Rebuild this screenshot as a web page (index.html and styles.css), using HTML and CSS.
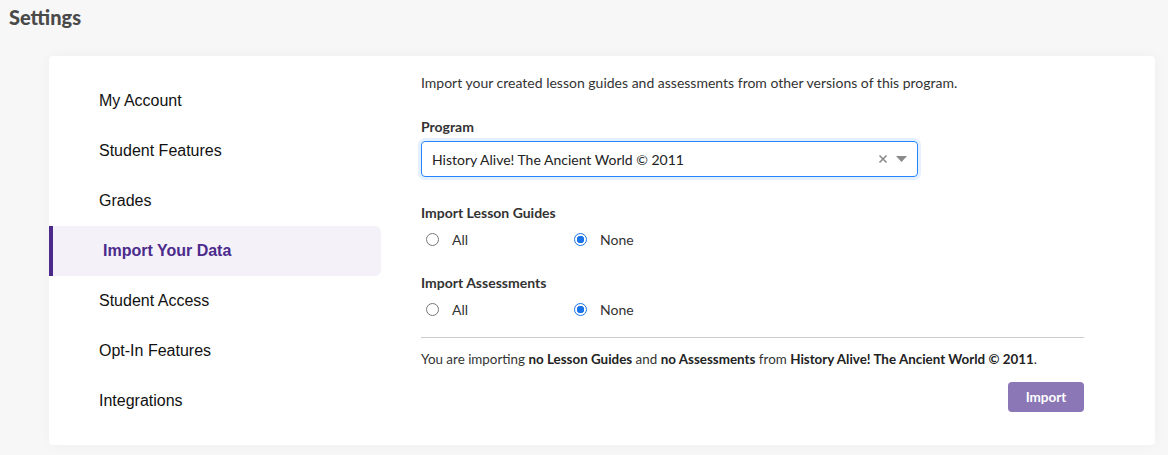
FILE: index.html
```html
<!DOCTYPE html>
<html lang="en">
<head>
<meta charset="utf-8">
<title>Settings</title>
<link rel="stylesheet" href="styles.css">
</head>
<body>
<h1 class="page-title">Settings</h1>
<div class="card">
  <nav class="sidebar">
    <a class="nav-item">My Account</a>
    <a class="nav-item">Student Features</a>
    <a class="nav-item">Grades</a>
    <a class="nav-item active">Import Your Data</a>
    <a class="nav-item">Student Access</a>
    <a class="nav-item">Opt-In Features</a>
    <a class="nav-item">Integrations</a>
  </nav>
  <main class="content">
    <p class="desc">Import your created lesson guides and assessments from other versions of this program.</p>
    <div class="label label-program">Program</div>
    <div class="select">
      <span class="select-value">History Alive! The Ancient World © 2011</span>
      <span class="select-icons">
        <svg class="clear" width="10" height="10" viewBox="0 0 10 10"><path d="M1.5 1.5 L8.5 8.5 M8.5 1.5 L1.5 8.5" stroke="#8a8a8a" stroke-width="1.6" fill="none"/></svg>
        <svg class="caret" width="11" height="6" viewBox="0 0 11 6"><path d="M0 0 H11 L5.5 6 Z" fill="#8a8a8a"/></svg>
      </span>
    </div>
    <div class="label label-group">Import Lesson Guides</div>
    <div class="radio-row">
      <label class="radio"><span class="dot"></span>All</label>
      <label class="radio"><span class="dot checked"></span>None</label>
    </div>
    <div class="label label-group">Import Assessments</div>
    <div class="radio-row">
      <label class="radio"><span class="dot"></span>All</label>
      <label class="radio"><span class="dot checked"></span>None</label>
    </div>
    <hr class="divider">
    <p class="summary">You are importing <b>no Lesson Guides</b> and <b>no Assessments</b> from <b>History Alive! The Ancient World © 2011</b>.</p>
    <div class="actions"><button class="btn">Import</button></div>
  </main>
</div>
</body>
</html>
```
FILE: styles.css
```css
* { box-sizing: border-box; }
html, body { margin: 0; padding: 0; }
body {
  background: #f7f7f7;
  font-family: Lato, "Liberation Sans", sans-serif;
  color: #333;
  height: 455px;
  overflow: hidden;
}
.page-title {
  margin: 0;
  padding: 5px 0 0 9px;
  font-size: 20px;
  line-height: 24px;
  font-weight: 900;
  color: #4a4a4a;
}
.card {
  margin: 27px 0 0 49px;
  width: 1106px;
  height: 389px;
  background: #fff;
  border-radius: 4px;
  box-shadow: 0 0 14px rgba(0,0,0,0.04);
  display: flex;
  gap: 40px;
}
.sidebar {
  width: 332px;
  padding-top: 20px;
  display: flex;
  flex-direction: column;
}
.nav-item {
  display: flex;
  align-items: center;
  height: 50px;
  padding-left: 50px;
  font-family: "Liberation Sans", Arial, sans-serif;
  font-size: 16px;
  color: #111;
}
.nav-item.active {
  background: #f4f1f8;
  border-left: 4px solid #4b2a8c;
  border-radius: 0 6px 6px 0;
  color: #4b2a8c;
  font-weight: 700;
}
.content {
  width: 663px;
  padding-top: 18px;
}
.desc {
  margin: 0;
  font-size: 14px;
  line-height: 18px;
  color: #333;
}
.label {
  font-size: 14px;
  line-height: 18px;
  font-weight: 700;
  color: #333;
}
.label-program { margin-top: 26px; }
.select {
  margin-top: 5px;
  width: 497px;
  height: 36px;
  border: 1px solid #2684ff;
  border-radius: 4px;
  box-shadow: 0 0 0 3px rgba(38,132,255,0.12);
  display: flex;
  align-items: center;
  justify-content: space-between;
  padding: 0 10px;
}
.select-value { font-size: 14px; color: #222; }
.select-icons { display: flex; align-items: center; gap: 8px; }
.label-group { margin-top: 27px; }
.radio-row {
  margin-top: 8px;
  display: flex;
  height: 18px;
  align-items: center;
  padding-left: 5px;
}
.radio-row + .label-group { margin-top: 26px; }
.radio {
  width: 148px;
  display: flex;
  align-items: center;
  gap: 13px;
  font-size: 14px;
  color: #333;
}
.dot {
  width: 13px;
  height: 13px;
  border-radius: 50%;
  border: 1px solid #777;
  background: #fff;
}
.dot.checked {
  border: 1.5px solid #1a73e8;
  background: radial-gradient(circle, #1a73e8 0 3.5px, #fff 4px);
}
.divider {
  margin: 19px 0 0;
  border: 0;
  border-top: 1px solid #ccc;
}
.summary {
  margin: 12px 0 0;
  font-size: 13.4px;
  line-height: 18px;
  color: #333;
}
.summary b { font-weight: 700; color: #222; }
.actions { display: flex; justify-content: flex-end; margin-top: 14px; }
.btn {
  width: 76px;
  height: 30px;
  border: 0;
  border-radius: 4px;
  background: #8b77b5;
  color: #fff;
  font-family: Lato, "Liberation Sans", sans-serif;
  font-size: 13.5px;
  font-weight: 700;
}
```
